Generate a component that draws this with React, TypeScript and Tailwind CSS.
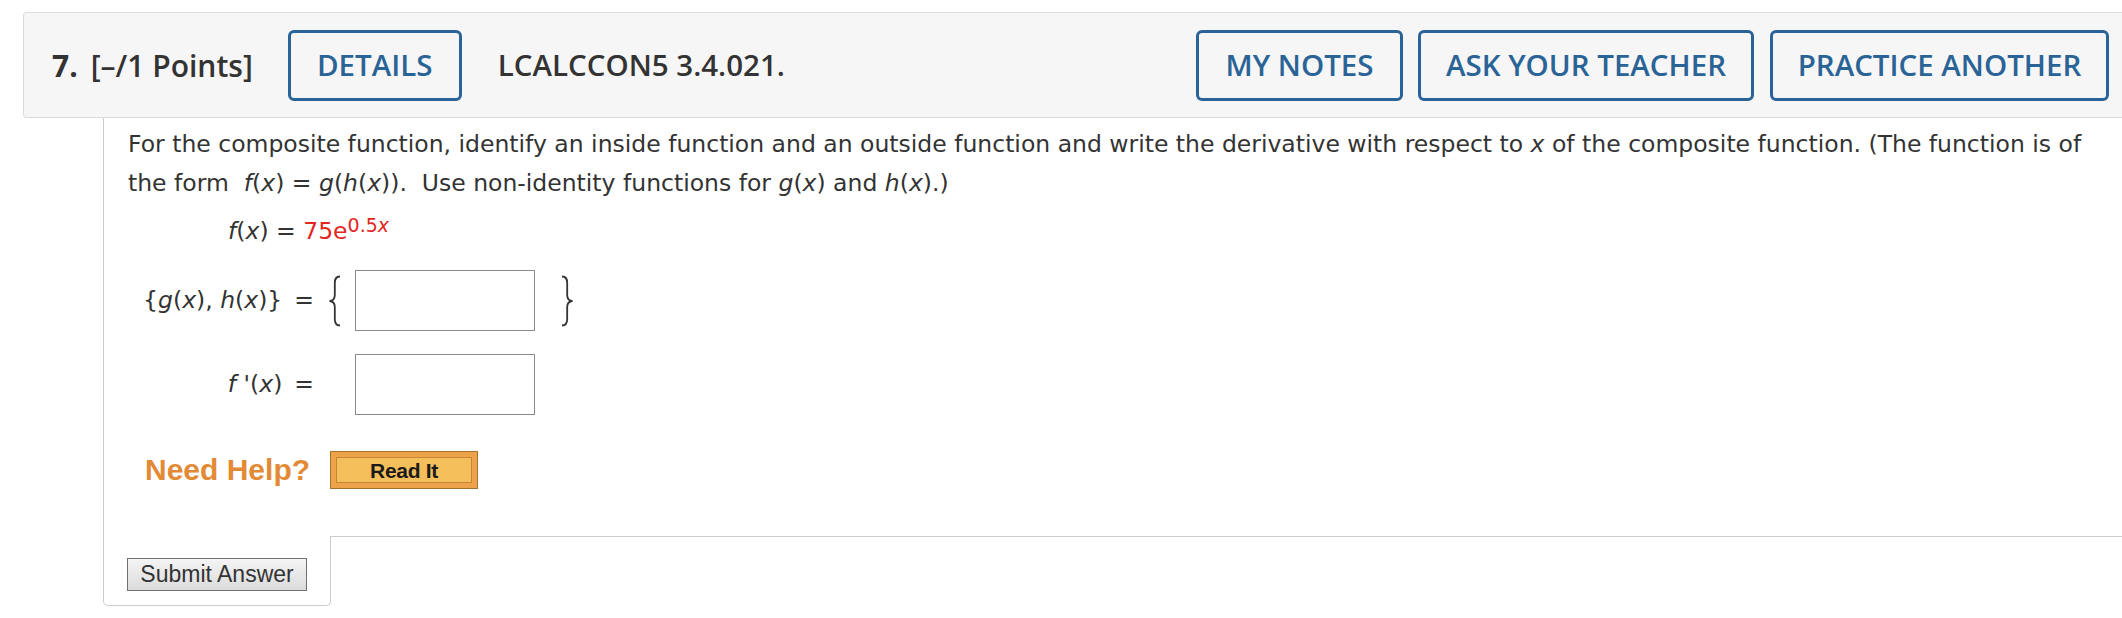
import React from "react";

const blue = "text-[#2a6496] border-[#2a6496]";

function HeaderButton({ label, width }: { label: string; width: string }) {
  return (
    <button
      type="button"
      className={`flex h-[71px] ${width} shrink-0 items-center justify-center rounded-[6px] border-[3px] bg-transparent text-[29.5px] font-semibold ${blue}`}
    >
      {label}
    </button>
  );
}

function Brace({ flip = false }: { flip?: boolean }) {
  return (
    <svg width="14" height="52" viewBox="0 0 14 52" className={flip ? "-scale-x-100" : ""}>
      <path
        d="M12 1.5 C8 1.5 6.8 3.5 6.8 8 L6.8 20 C6.8 24 5 25.8 1.5 26 C5 26.2 6.8 28 6.8 32 L6.8 44 C6.8 48.5 8 50.5 12 50.5"
        fill="none"
        stroke="#333"
        strokeWidth="1.8"
      />
    </svg>
  );
}

function AnswerBox() {
  return <div className="h-[61px] w-[180px] shrink-0 border border-[#8a8a8a] bg-white" />;
}

export default function App() {
  return (
    <div className="h-[618px] w-[2122px] overflow-hidden bg-white pl-[23px] pt-[12px]">
      <header
        className="flex h-[106px] items-center rounded-l-[4px] border border-r-0 border-[#dcdcdc] bg-[#f6f6f6] pl-[28px] pr-[13px] text-[30px] font-semibold text-[#333]"
        style={{ fontFamily: '"Open Sans", sans-serif' }}
      >
        <span className="font-bold">7.</span>
        <span className="ml-[13px]">[–/1 Points]</span>
        <div className="ml-[35px]">
          <HeaderButton label="DETAILS" width="w-[174px]" />
        </div>
        <span className="ml-[36px] text-[29.5px]">LCALCCON5 3.4.021.</span>
        <div className="flex-1" />
        <HeaderButton label="MY NOTES" width="w-[207px]" />
        <div className="ml-[15px]">
          <HeaderButton label="ASK YOUR TEACHER" width="w-[336px]" />
        </div>
        <div className="ml-[16px]">
          <HeaderButton label="PRACTICE ANOTHER" width="w-[339px]" />
        </div>
      </header>

      <div className="ml-[80px]">
        <div
          className="border-l border-[#cccccc] pb-[47px] pl-[24px] pt-[7px] text-[23.5px] leading-[39px] text-[#333]"
          style={{ fontFamily: '"DejaVu Sans", Verdana, sans-serif' }}
        >
          <p className="whitespace-nowrap">
            For the composite function, identify an inside function and an outside function and write the
            derivative with respect to <i>x</i> of the composite function. (The function is of
          </p>
          <p className="whitespace-nowrap">
            the form&nbsp; <i>f</i>(<i>x</i>) = <i>g</i>(<i>h</i>(<i>x</i>)).&nbsp; Use non-identity functions
            for <i>g</i>(<i>x</i>) and <i>h</i>(<i>x</i>).)
          </p>

          <p className="mt-[9px] whitespace-nowrap pl-[100px]">
            <i>f</i>(<i>x</i>) ={" "}
            <span className="text-[#e3261f]">
              75e
              <sup className="relative top-[-7px] text-[19px]">
                0.5<i>x</i>
              </sup>
            </span>
          </p>

          <div className="mt-[19px] flex items-center">
            <div className="flex w-[186px] justify-end">
              <span>
                {"{"}
                <i>g</i>(<i>x</i>), <i>h</i>(<i>x</i>){"}"}
              </span>
              <span className="ml-[12px]">=</span>
            </div>
            <div className="flex w-[41px] justify-start pl-[14px]">
              <Brace />
            </div>
            <AnswerBox />
            <div className="ml-[25px]">
              <Brace flip />
            </div>
          </div>

          <div className="mt-[23px] flex items-center">
            <div className="flex w-[186px] justify-end">
              <span>
                <i>f</i> '(<i>x</i>)
              </span>
              <span className="ml-[12px]">=</span>
            </div>
            <div className="w-[41px]" />
            <AnswerBox />
          </div>

          <div className="mt-[36px] flex items-center pl-[17px]" style={{ fontFamily: '"Liberation Sans", Arial, sans-serif' }}>
            <span className="text-[30px] font-bold leading-[38px] text-[#e38a36]">Need Help?</span>
            <button
              type="button"
              className="ml-[20px] flex h-[38px] w-[148px] items-center justify-center border border-[#a5712f] bg-[#eea24a] p-[5px]"
            >
              <span className="flex h-full w-full items-center justify-center border border-[#c48639] bg-[#f4bf5b] text-[21px] font-bold leading-none tracking-[-0.3px] text-[#1a1a1a]">
                Read It
              </span>
            </button>
          </div>
        </div>

        <div className="flex">
          <div className="w-[228px] rounded-b-[5px] border-x border-b border-[#cccccc] pb-[14px] pl-[23px] pt-[22px]">
            <button
              type="button"
              className="h-[33px] w-[180px] border border-[#707070] bg-gradient-to-b from-[#f4f4f4] to-[#dcdcdc] text-[23px] leading-none text-[#333]"
              style={{ fontFamily: '"Liberation Sans", Arial, sans-serif' }}
            >
              Submit Answer
            </button>
          </div>
          <div className="flex-1 border-t border-[#cccccc]" />
        </div>
      </div>
    </div>
  );
}
